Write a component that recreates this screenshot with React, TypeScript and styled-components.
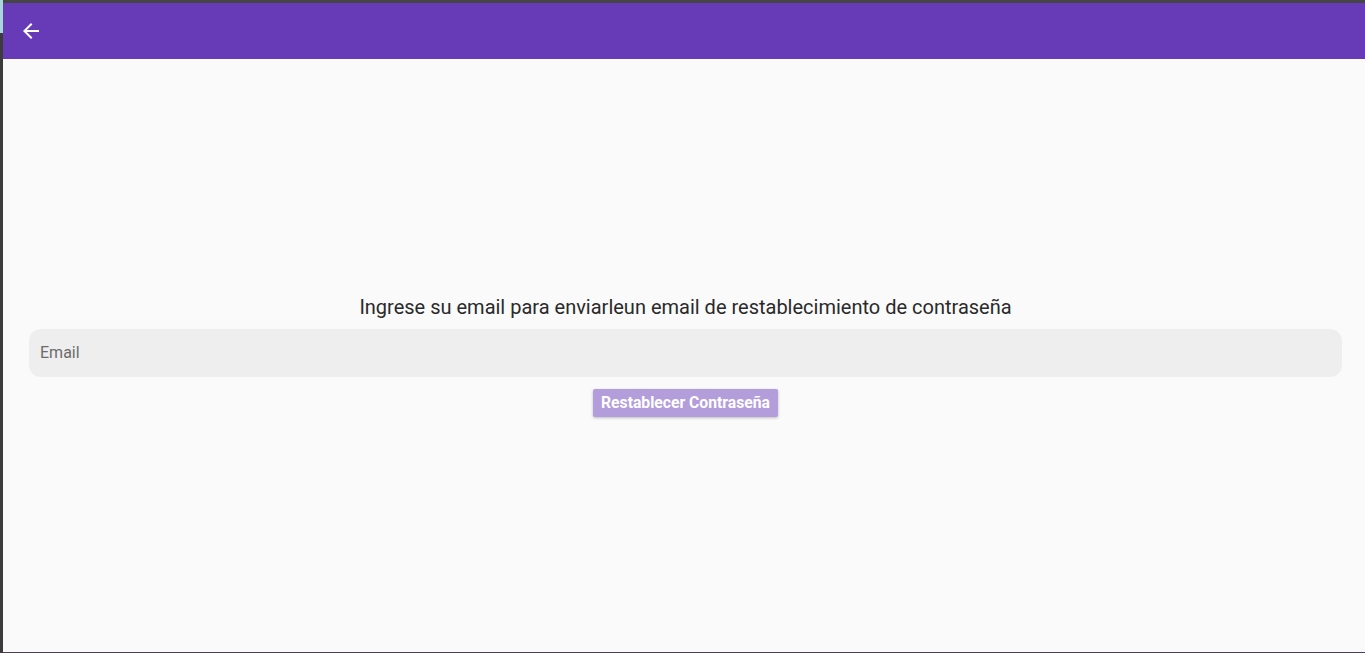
import React from "react";
import styled, { createGlobalStyle } from "styled-components";

const Global = createGlobalStyle`
  html, body { margin: 0; padding: 0; height: 100%; }
  body { background: #3a3a3a; font-family: Roboto, "Noto Sans", sans-serif; overflow: hidden; }
  #root { height: 100%; }
`;

const Frame = styled.div`
  display: flex;
  width: 1365px;
  height: 653px;
  background: #3a3a3a;
`;

const SideStrip = styled.div`
  width: 3px;
  display: flex;
  flex-direction: column;
  flex-shrink: 0;
`;

const StripCap = styled.div`
  height: 33px;
  background: #a9d6d9;
`;

const StripRest = styled.div`
  flex: 1;
  background: #3c3c3c;
`;

const Window = styled.div`
  flex: 1;
  display: flex;
  flex-direction: column;
  padding-top: 3px;
  background: #454545;
`;

const AppBar = styled.header`
  height: 56px;
  background: #673ab7;
  display: flex;
  align-items: center;
  padding-left: 16px;
  flex-shrink: 0;
  box-sizing: border-box;
`;

const IconButton = styled.button`
  width: 24px;
  height: 24px;
  padding: 0;
  border: none;
  background: transparent;
  color: #fff;
  display: flex;
  align-items: center;
  justify-content: center;
  cursor: pointer;
`;

const Body = styled.main`
  flex: 1;
  background: #fafafa;
  display: flex;
  flex-direction: column;
  justify-content: center;
  align-items: stretch;
  padding: 0 23px 0 26px;
  border-bottom: 1px solid #4a3f55;
`;

const Column = styled.div`
  display: flex;
  flex-direction: column;
  align-items: center;
`;

const Prompt = styled.p`
  margin: 0 0 10px;
  font-size: 20px;
  line-height: 24px;
  color: #2a2a2a;
  text-align: center;
`;

const Input = styled.input`
  align-self: stretch;
  height: 48px;
  box-sizing: border-box;
  border: none;
  outline: none;
  border-radius: 12px;
  background: #eeeeee;
  padding: 0 11px;
  font-family: Roboto, sans-serif;
  font-size: 16px;
  color: #333;
  &::placeholder { color: #6b6b6b; }
`;

const Button = styled.button`
  margin-top: 12px;
  height: 28px;
  padding: 0 8px;
  border: none;
  border-radius: 2px;
  background: #b39ddb;
  color: #fff;
  font-family: Roboto, sans-serif;
  font-weight: 700;
  font-size: 15.7px;
  box-shadow: 0 1px 3px rgba(0, 0, 0, 0.25);
  cursor: pointer;
`;

export default function App() {
  return (
    <>
      <Global />
      <Frame>
        <SideStrip>
          <StripCap />
          <StripRest />
        </SideStrip>
        <Window>
          <AppBar>
            <IconButton aria-label="Volver">
              <svg width="24" height="24" viewBox="0 0 24 24" fill="currentColor">
                <path d="M20 11H7.83l5.59-5.59L12 4l-8 8 8 8 1.41-1.41L7.83 13H20v-2z" />
              </svg>
            </IconButton>
          </AppBar>
          <Body>
            <Column>
              <Prompt>Ingrese su email para enviarleun email de restablecimiento de contraseña</Prompt>
              <Input placeholder="Email" />
              <Button>Restablecer Contraseña</Button>
            </Column>
          </Body>
        </Window>
      </Frame>
    </>
  );
}
